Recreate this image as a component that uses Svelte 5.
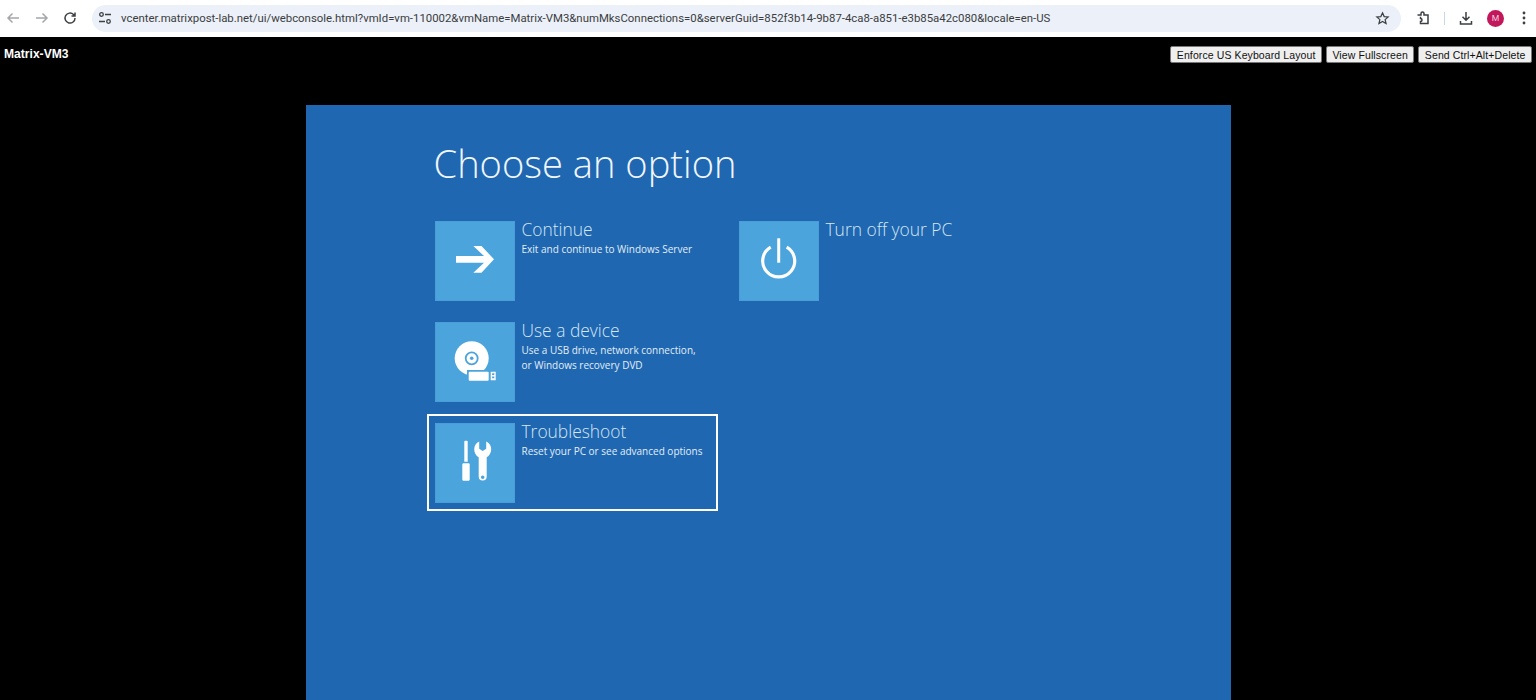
<script>
	const options = [
		{ title: 'Continue', lines: ['Exit and continue to Windows Server'], icon: 'arrow', selected: false },
		{ title: 'Use a device', lines: ['Use a USB drive, network connection,', 'or Windows recovery DVD'], icon: 'disc', selected: false },
		{ title: 'Troubleshoot', lines: ['Reset your PC or see advanced options'], icon: 'tools', selected: true }
	]
</script>

{#snippet tile(icon)}
	<div class="tile">
		<svg viewBox="0 0 80 80" width="80" height="80" fill="#fff">
			{#if icon === 'arrow'}
				<path d="M21 35h28L38.300 25h8.200L59 38.300 46.500 51.700h-8.200L49 41.700H21z" />
			{:else if icon === 'disc'}
				<circle cx="36.700" cy="36.300" r="17" />
				<circle cx="36.700" cy="36.300" r="6" fill="none" stroke="#4ca4dd" stroke-width="1.800" />
				<circle cx="36.700" cy="36.300" r="1.800" fill="#4ca4dd" />
				<rect x="32" y="48" width="23" height="12.500" fill="#4ca4dd" />
				<rect x="33.700" y="49.700" width="20" height="9" rx="1" />
				<path fill-rule="evenodd" d="M55.700 49.700h5v8.500h-5zm1.400 1.500v1.800h2.200v-1.800zm0 3.200v1.800h2.200v-1.800z" />
			{:else if icon === 'tools'}
				<path d="M30 17.700h2l.7.8v20.200h-3.400V18.500z" />
				<path d="M27.300 41l.8-.8h5.800l.8.800v16l-.8.800h-5.800l-.8-.800z" />
				<path fill-rule="evenodd" d="M44.200 18.500v7.200l3.500 2.300 3.500-2.300v-7.200c3 1.300 5 4.300 5 7.700 0 3.700-1.900 6.500-4.500 8v19.300a4 4 0 0 1-8 0V34.200c-2.600-1.500-4.500-4.300-4.500-8 0-3.400 2-6.400 5-7.700zm3.500 34a1.800 1.800 0 1 0 0 3.600 1.800 1.800 0 0 0 0-3.600z" />
			{/if}
		</svg>
	</div>
{/snippet}

<div class="page">
	<header class="browser">
		<svg class="nav dim" viewBox="0 0 16 16"><path d="M14 8H3M7.500 3.500 3 8l4.500 4.500" /></svg>
		<svg class="nav dim" viewBox="0 0 16 16"><path d="M2 8h11M8.500 3.500 13 8l-4.500 4.500" /></svg>
		<svg class="nav" viewBox="0 0 16 16"><path d="M13 8a5 5 0 1 1-1.500-3.500L13 6M13 2.500V6H9.500" /></svg>
		<div class="omnibox">
			<svg class="tune" viewBox="0 0 16 16">
				<circle cx="4.500" cy="4.500" r="1.800" />
				<path d="M8 4.500h6M2 11.500h6" />
				<circle cx="11.500" cy="11.500" r="1.800" />
			</svg>
			<span class="url">vcenter.matrixpost-lab.net/ui/webconsole.html?vmId=vm-110002&vmName=Matrix-VM3&numMksConnections=0&serverGuid=852f3b14-9b87-4ca8-a851-e3b85a42c080&locale=en-US</span>
			<svg class="star" viewBox="0 0 16 16"><path d="m8 2 1.800 4 4.200.4-3.200 2.800 1 4.200L8 11.200l-3.800 2.200 1-4.200L2 6.400 6.200 6z" /></svg>
		</div>
		<div class="actions">
			<svg class="nav" viewBox="0 0 16 16"><path d="M2.500 5H6V3.500a1.500 1.500 0 0 1 3 0V5h4v8.500H5.500v-2a1.500 1.500 0 0 0 0-3V6.800" /></svg>
			<span class="sep"></span>
			<svg class="nav download" viewBox="0 0 16 16"><path d="M8 2v8M4.500 6.800 8 10.300l3.500-3.500M2.500 11v3h11v-3" /></svg>
			<span class="avatar">M</span>
			<svg class="dots" viewBox="0 0 4 16" fill="#3c4043"><circle cx="2" cy="3" r="1.400" /><circle cx="2" cy="8" r="1.400" /><circle cx="2" cy="13" r="1.400" /></svg>
		</div>
	</header>

	<main class="console">
		<div class="bar">
			<strong>Matrix-VM3</strong>
			<div class="buttons">
				<button>Enforce US Keyboard Layout</button>
				<button>View Fullscreen</button>
				<button>Send Ctrl+Alt+Delete</button>
			</div>
		</div>

		<section class="screen">
			<h1>Choose an option</h1>
			<div class="grid">
				<div class="col">
					{#each options as o}
						<div class="option" class:selected={o.selected}>
							{@render tile(o.icon)}
							<div class="text">
								<h2>{o.title}</h2>
								<p>{#each o.lines as line}{line}<br />{/each}</p>
							</div>
						</div>
					{/each}
				</div>
				<div class="col">
					<div class="option">
						<div class="tile">
							<svg viewBox="0 0 80 80" width="80" height="80" fill="none" stroke="#fff" stroke-width="3.200">
								<path d="M39.700 17.300v24.400" stroke-width="3" />
								<path d="M31.700 26.100a16 16 0 1 0 16 0" />
							</svg>
						</div>
						<div class="text">
							<h2>Turn off your PC</h2>
						</div>
					</div>
				</div>
			</div>
		</section>
	</main>
</div>

<style>
	:global(body) {
		background: #000;
		overflow: hidden;
	}
	.page {
		height: 700px;
		display: flex;
		flex-direction: column;
		font-family: 'Liberation Sans', Arial, sans-serif;
	}
	.browser {
		height: 37px;
		flex: none;
		display: flex;
		align-items: center;
		box-sizing: border-box;
		padding: 0 0 1px 5px;
		background: #fff;
		gap: 8px;
	}
	.nav {
		width: 16px;
		height: 16px;
		flex: none;
		fill: none;
		stroke: #3c4043;
		stroke-width: 1.5;
	}
	.dim {
		stroke: #a4a7ab;
	}
	.browser > .nav {
		margin-right: 4.500px;
	}
	.omnibox {
		margin-left: 1.500px;
		width: 1309px;
		height: 27px;
		flex: none;
		display: flex;
		align-items: center;
		border-radius: 14px;
		background: #ebf0f9;
		padding: 0 11px 0 5px;
		box-sizing: border-box;
	}
	.tune {
		width: 16px;
		height: 16px;
		flex: none;
		fill: none;
		stroke: #3c4043;
		stroke-width: 1.3;
	}
	.url {
		flex: 1;
		margin-left: 8px;
		font-family: Roboto, 'Liberation Sans', sans-serif;
		font-size: 11.380px;
		color: #3b3d40;
		white-space: nowrap;
	}
	.star {
		width: 15px;
		height: 15px;
		flex: none;
		fill: none;
		stroke: #3c4043;
		stroke-width: 1.3;
	}
	.actions {
		margin-left: 6px;
		display: flex;
		align-items: center;
	}
	.sep {
		width: 1px;
		height: 13px;
		margin-left: 13px;
		background: #c7d7ee;
	}
	.download {
		margin-left: 13px;
	}
	.avatar {
		width: 17px;
		height: 17px;
		margin-left: 13px;
		border-radius: 50%;
		background: #c2185b;
		color: #f5d5e2;
		font-size: 9px;
		line-height: 17px;
		text-align: center;
	}
	.dots {
		width: 4px;
		height: 16px;
		margin-left: 18px;
	}
	.console {
		flex: 1;
		min-height: 0;
		background: #000;
		display: flex;
		flex-direction: column;
		align-items: center;
	}
	.bar {
		align-self: stretch;
		height: 68px;
		flex: none;
		display: flex;
		justify-content: space-between;
		align-items: flex-start;
		padding: 10px 4px 0;
		box-sizing: border-box;
	}
	.bar strong {
		color: #fff;
		font-size: 12.100px;
		line-height: 14px;
	}
	.buttons {
		display: flex;
		gap: 4px;
		margin-top: -1px;
	}
	button {
		height: 17px;
		margin: 0;
		padding: 0 5.500px;
		border: 1px solid #777;
		border-radius: 2px;
		background: #efefef;
		color: #111;
		font: 10.500px/14px 'Liberation Sans', Arial, sans-serif;
		letter-spacing: 0.1px;
		white-space: nowrap;
	}
	.screen {
		width: 925px;
		flex: 1;
		min-height: 0;
		background: #1f67b1;
		color: #fff;
		padding: 33px 0 0 121px;
		box-sizing: border-box;
		font-family: 'Open Sans', 'Noto Sans', sans-serif;
	}
	h1 {
		margin: 0 0 24px 7px;
		font-size: 38.100px;
		line-height: 50px;
		font-weight: 300;
		color: #f1f6fb;
	}
	.grid {
		display: flex;
		gap: 13px;
	}
	.col {
		display: flex;
		flex-direction: column;
		gap: 4px;
	}
	.option {
		width: 291px;
		height: 97px;
		display: flex;
		gap: 7px;
		padding: 7px 6px 6px;
		box-sizing: border-box;
		border: 2px solid transparent;
	}
	.selected {
		border-color: #fff;
	}
	.tile {
		width: 80px;
		height: 80px;
		flex: none;
		background: #4ca4dd;
		box-shadow: inset 0 0 0 1px #4a9ed8;
	}
	.tile svg {
		display: block;
	}
	.text {
		white-space: nowrap;
	}
	h2 {
		margin: -4px 0 1px;
		font-size: 17.400px;
		line-height: 24px;
		font-weight: 300;
		color: #d5e6f4;
	}
	p {
		margin: 0;
		font-size: 10px;
		line-height: 14.500px;
		color: #e3eef7;
	}
</style>
